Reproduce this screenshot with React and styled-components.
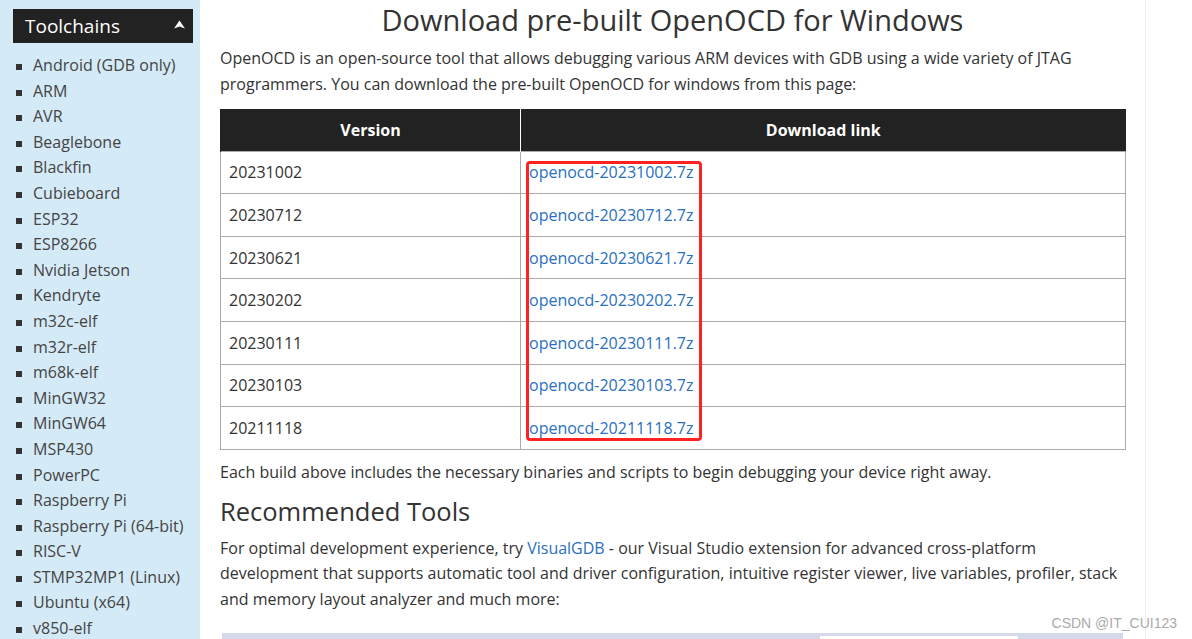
import React from 'react'
import styled, { createGlobalStyle } from 'styled-components'

const toolchains = [
  'Android (GDB only)', 'ARM', 'AVR', 'Beaglebone', 'Blackfin', 'Cubieboard',
  'ESP32', 'ESP8266', 'Nvidia Jetson', 'Kendryte', 'm32c-elf', 'm32r-elf',
  'm68k-elf', 'MinGW32', 'MinGW64', 'MSP430', 'PowerPC', 'Raspberry Pi',
  'Raspberry Pi (64-bit)', 'RISC-V', 'STMP32MP1 (Linux)', 'Ubuntu (x64)', 'v850-elf',
]

const builds = ['20231002', '20230712', '20230621', '20230202', '20230111', '20230103', '20211118']

export default function App() {
  return (
    <>
      <Global />
      <Page>
        <Sidebar>
          <Sidehead>
            <span>Toolchains</span>
            <svg width="11" height="9" viewBox="0 0 11 9">
              <path d="M0 8.5 L5.5 0.5 L11 8.5 L5.5 6.5 Z" fill="#fff" />
            </svg>
          </Sidehead>
          <Sidelist>
            {toolchains.map(t => <Sideitem key={t}>{t}</Sideitem>)}
          </Sidelist>
        </Sidebar>
        <Main>
          <Title>Download pre-built OpenOCD for Windows</Title>
          <Para>
            OpenOCD is an open-source tool that allows debugging various ARM devices with GDB using a wide variety of JTAG
            programmers. You can download the pre-built OpenOCD for windows from this page:
          </Para>
          <TableWrap>
            <Table>
              <thead>
                <tr>
                  <Th $w="299px">Version</Th>
                  <Th>Download link</Th>
                </tr>
              </thead>
              <tbody>
                {builds.map(b => (
                  <tr key={b}>
                    <Td>{b}</Td>
                    <Td><Link href="#">openocd-{b}.7z</Link></Td>
                  </tr>
                ))}
              </tbody>
            </Table>
            <Highlight />
          </TableWrap>
          <Para $top="10px">Each build above includes the necessary binaries and scripts to begin debugging your device right away.</Para>
          <Subtitle>Recommended Tools</Subtitle>
          <Para $top="7px">
            For optimal development experience, try <Link href="#">VisualGDB</Link> - our Visual Studio extension for advanced cross-platform
            development that supports automatic tool and driver configuration, intuitive register viewer, live variables, profiler, stack
            and memory layout analyzer and much more:
          </Para>
          <Promo>
            <PromoBox />
          </Promo>
        </Main>
        <Watermark>CSDN @IT_CUI123</Watermark>
      </Page>
    </>
  )
}

const Global = createGlobalStyle`
  body {
    margin:0;
    background:#fff;
    font-family:"Open Sans", "Noto Sans", sans-serif;
    color:#333;
    overflow:hidden;
  }
`;
const Page = styled.div`
    display:flex;
    align-items:flex-start;
    height:639px;
    overflow:hidden;
    position:relative;
`;
const Sidebar = styled.div`
    width:200px;
    flex-shrink:0;
    align-self:stretch;
    background:#d5eaf7;
    padding:9px 7px 0 13px;
    box-sizing:border-box;
`;
const Sidehead = styled.div`
    height:34px;
    background:#222;
    color:#fff;
    font-size:19px;
    display:flex;
    align-items:center;
    justify-content:space-between;
    padding:0 8px 0 12px;
    svg { margin-top:-3px; }
`;
const Sidelist = styled.ul`
    list-style:none;
    margin:10px 0 0;
    padding:0;
`;
const Sideitem = styled.li`
    font-size:16px;
    line-height:25.6px;
    color:#444;
    padding-left:20px;
    position:relative;
    white-space:nowrap;
    &::before {
      content:"";
      position:absolute;
      left:3px;
      top:11px;
      width:6px;
      height:6px;
      background:#333;
    }
`;
const Main = styled.div`
    width:946px;
    flex-shrink:0;
    align-self:stretch;
    padding:0 20px;
    box-sizing:border-box;
    border-right:1px solid #eee;
`;
const Title = styled.h1`
    margin:0;
    text-align:center;
    font-size:29px;
    line-height:40px;
    font-weight:400;
    color:#333;
`;
const Para = styled.p`
    margin:${p => p.$top || '6px'} 0 0;
    font-size:16px;
    line-height:25.8px;
    color:#333;
`;
const TableWrap = styled.div`
    position:relative;
    margin-top:11px;
`;
const Table = styled.table`
    width:906px;
    border-collapse:collapse;
    font-size:16px;
`;
const Th = styled.th`
    width:${p => p.$w || 'auto'};
    height:42px;
    background:#222;
    color:#fff;
    font-weight:700;
    text-align:center;
    border-left:1px solid #fff;
    padding:0;
    &:first-child { border-left:1px solid #222; }
`;
const Td = styled.td`
    height:41.6px;
    border:1px solid #aaa;
    padding:0 8px;
    color:#333;
`;
const Link = styled.a`
    color:#2a6fc0;
    text-decoration:none;
`;
const Highlight = styled.div`
    position:absolute;
    left:306px;
    top:52px;
    width:170px;
    height:274px;
    border:3px solid #f22;
    border-radius:4px;
    pointer-events:none;
`;
const Subtitle = styled.h2`
    margin:7px 0 0;
    font-size:25.5px;
    line-height:36px;
    font-weight:400;
    color:#333;
`;
const Promo = styled.div`
    margin:20px 2px 0;
    height:40px;
    background:#d5dae8;
    padding:3px 0 0 598px;
`;
const PromoBox = styled.div`
    width:198px;
    height:40px;
    background:#fff;
`;
const Watermark = styled.div`
    position:absolute;
    right:15px;
    bottom:8px;
    font-family:"Liberation Sans", Arial, sans-serif;
    font-size:14px;
    color:#aaa;
`;
